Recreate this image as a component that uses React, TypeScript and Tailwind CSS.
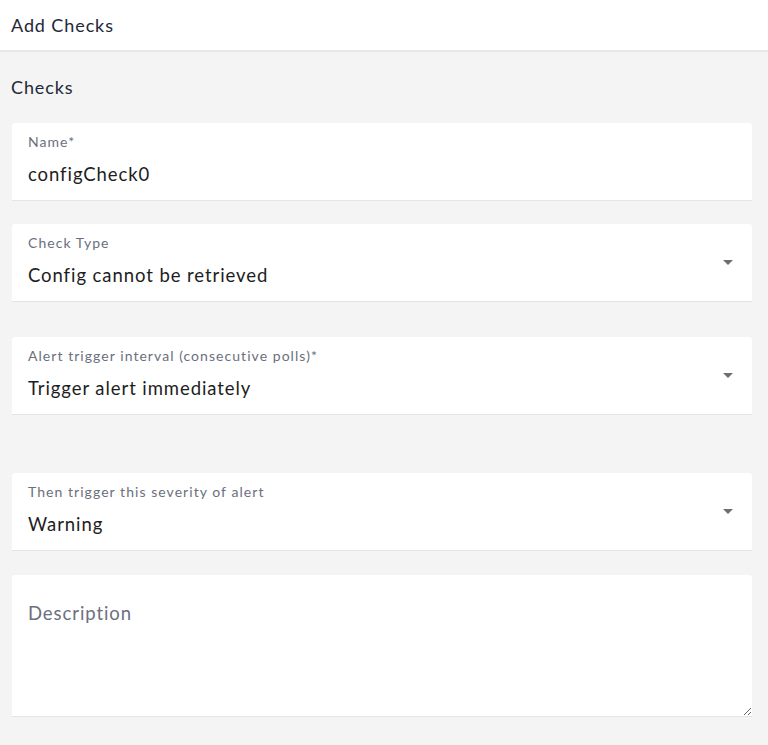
import React from "react";

const font = "font-['Lato','Open_Sans',sans-serif]";

function Arrow() {
  return (
    <svg
      className="absolute right-[19px] top-1/2 -translate-y-[3px]"
      width="10"
      height="5"
      viewBox="0 0 10 5"
    >
      <path d="M0 0h10L5 5z" fill="#6e6e6e" />
    </svg>
  );
}

function Field({
  label,
  value,
  select,
  className = "",
}: {
  label: string;
  value: string;
  select?: boolean;
  className?: string;
}) {
  return (
    <div
      className={`relative h-[78px] bg-white rounded-t-[3px] border-b-[1.5px] border-[#e3e3ea] px-4 pt-[11px] ${className}`}
    >
      <div className="text-[14px] leading-4 tracking-[0.075em] text-[#6b6f7e]">
        {label}
      </div>
      <div className="mt-3 text-[18.5px] leading-6 tracking-[0.05em] text-[#1d1d22]">
        {value}
      </div>
      {select && <Arrow />}
    </div>
  );
}

export default function App() {
  return (
    <div className={`min-h-screen bg-[#f4f4f4] ${font}`}>
      {/* header */}
      <div className="h-[52px] bg-white border-b-2 border-[#e8e8e8] flex items-center px-[11px] pt-[1px]">
        <span className="text-[18px] tracking-[0.05em] text-[#232838]">
          Add Checks
        </span>
      </div>

      <div className="pl-3 pr-4">
        <h2 className="pt-[23px] text-[18px] leading-6 tracking-[0.05em] text-[#232838] -ml-[1px]">
          Checks
        </h2>

        <Field label="Name*" value="configCheck0" className="mt-6" />
        <Field
          label="Check Type"
          value="Config cannot be retrieved"
          select
          className="mt-[23px]"
        />
        <Field
          label="Alert trigger interval (consecutive polls)*"
          value="Trigger alert immediately"
          select
          className="mt-[35px]"
        />
        <Field
          label="Then trigger this severity of alert"
          value="Warning"
          select
          className="mt-[58px]"
        />

        <div className="mt-6 bg-white rounded-t-[3px] border-b-[1.5px] border-[#e3e3ea]">
          <textarea
            placeholder="Description"
            className="block w-full h-[141px] px-4 pt-[26px] text-[18.5px] leading-6 tracking-[0.05em] text-[#1d1d22] placeholder-[#6b6f7e] bg-transparent outline-none resize-y"
          />
        </div>
      </div>
    </div>
  );
}
